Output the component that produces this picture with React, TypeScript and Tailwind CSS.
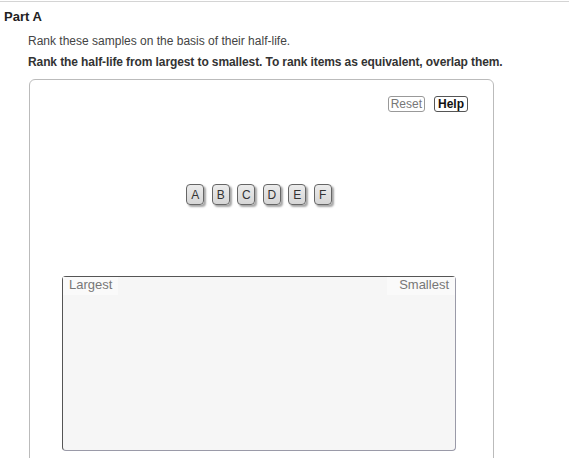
import React from "react";

const chips = ["A", "B", "C", "D", "E", "F"];

export default function App() {
  return (
    <div className="w-[569px] h-[458px] overflow-hidden bg-white font-['Liberation_Sans',Arial,sans-serif]">
      <div className="mt-[1px] border-t border-[#d4d4d4]">
        <h2 className="pl-[4px] pt-[7px] text-[13px] leading-[16px] font-bold text-[#222]">Part A</h2>
        <div className="pl-[28px]">
          <p className="mt-[9px] text-[12px] leading-[14px] text-[#444]">
            Rank these samples on the basis of their half-life.
          </p>
          <p className="mt-[7px] text-[12px] leading-[14px] font-bold text-[#333] tracking-[-0.1px]">
            Rank the half-life from largest to smallest. To rank items as equivalent, overlap them.
          </p>
          <div className="mt-[10px] ml-[1px] w-[465px] h-[400px] rounded-[6px] border border-[#bbbbbb] bg-white">
            <div className="flex justify-end gap-[9px] pt-[16px] pr-[25px]">
              <button className="h-[16px] px-[2px] rounded-[3px] border border-[#999] text-[12px] leading-[14px] text-[#777] bg-white">
                Reset
              </button>
              <button className="h-[16px] px-[3px] rounded-[3px] border border-[#555] text-[12px] leading-[14px] font-bold text-[#111] bg-white">
                Help
              </button>
            </div>
            <div className="mt-[72px] flex justify-center gap-[7.5px] pr-[5px]">
              {chips.map((c) => (
                <div
                  key={c}
                  className="w-[18px] h-[21px] rounded-[4px] border border-[#666] bg-gradient-to-b from-[#ececec] to-[#d6d6d6] shadow-[2px_2px_2px_rgba(0,0,0,0.35)] flex items-center justify-center text-[12px] text-[#333]"
                >
                  {c}
                </div>
              ))}
            </div>
            <div className="mt-[71px] ml-[32px] w-[394px] h-[175px] rounded-[4px] border border-[#9a9aa8] border-l-[#555] border-t-[#555] bg-[#f6f6f6] flex justify-between items-start">
              <span className="bg-[#fafafa] pl-[6px] pr-[6px] h-[18px] text-[13px] leading-[16px] text-[#777]">Largest</span>
              <span className="bg-[#fafafa] pl-[12px] pr-[6px] h-[18px] text-[13px] leading-[16px] text-[#777]">Smallest</span>
            </div>
          </div>
        </div>
      </div>
    </div>
  );
}
